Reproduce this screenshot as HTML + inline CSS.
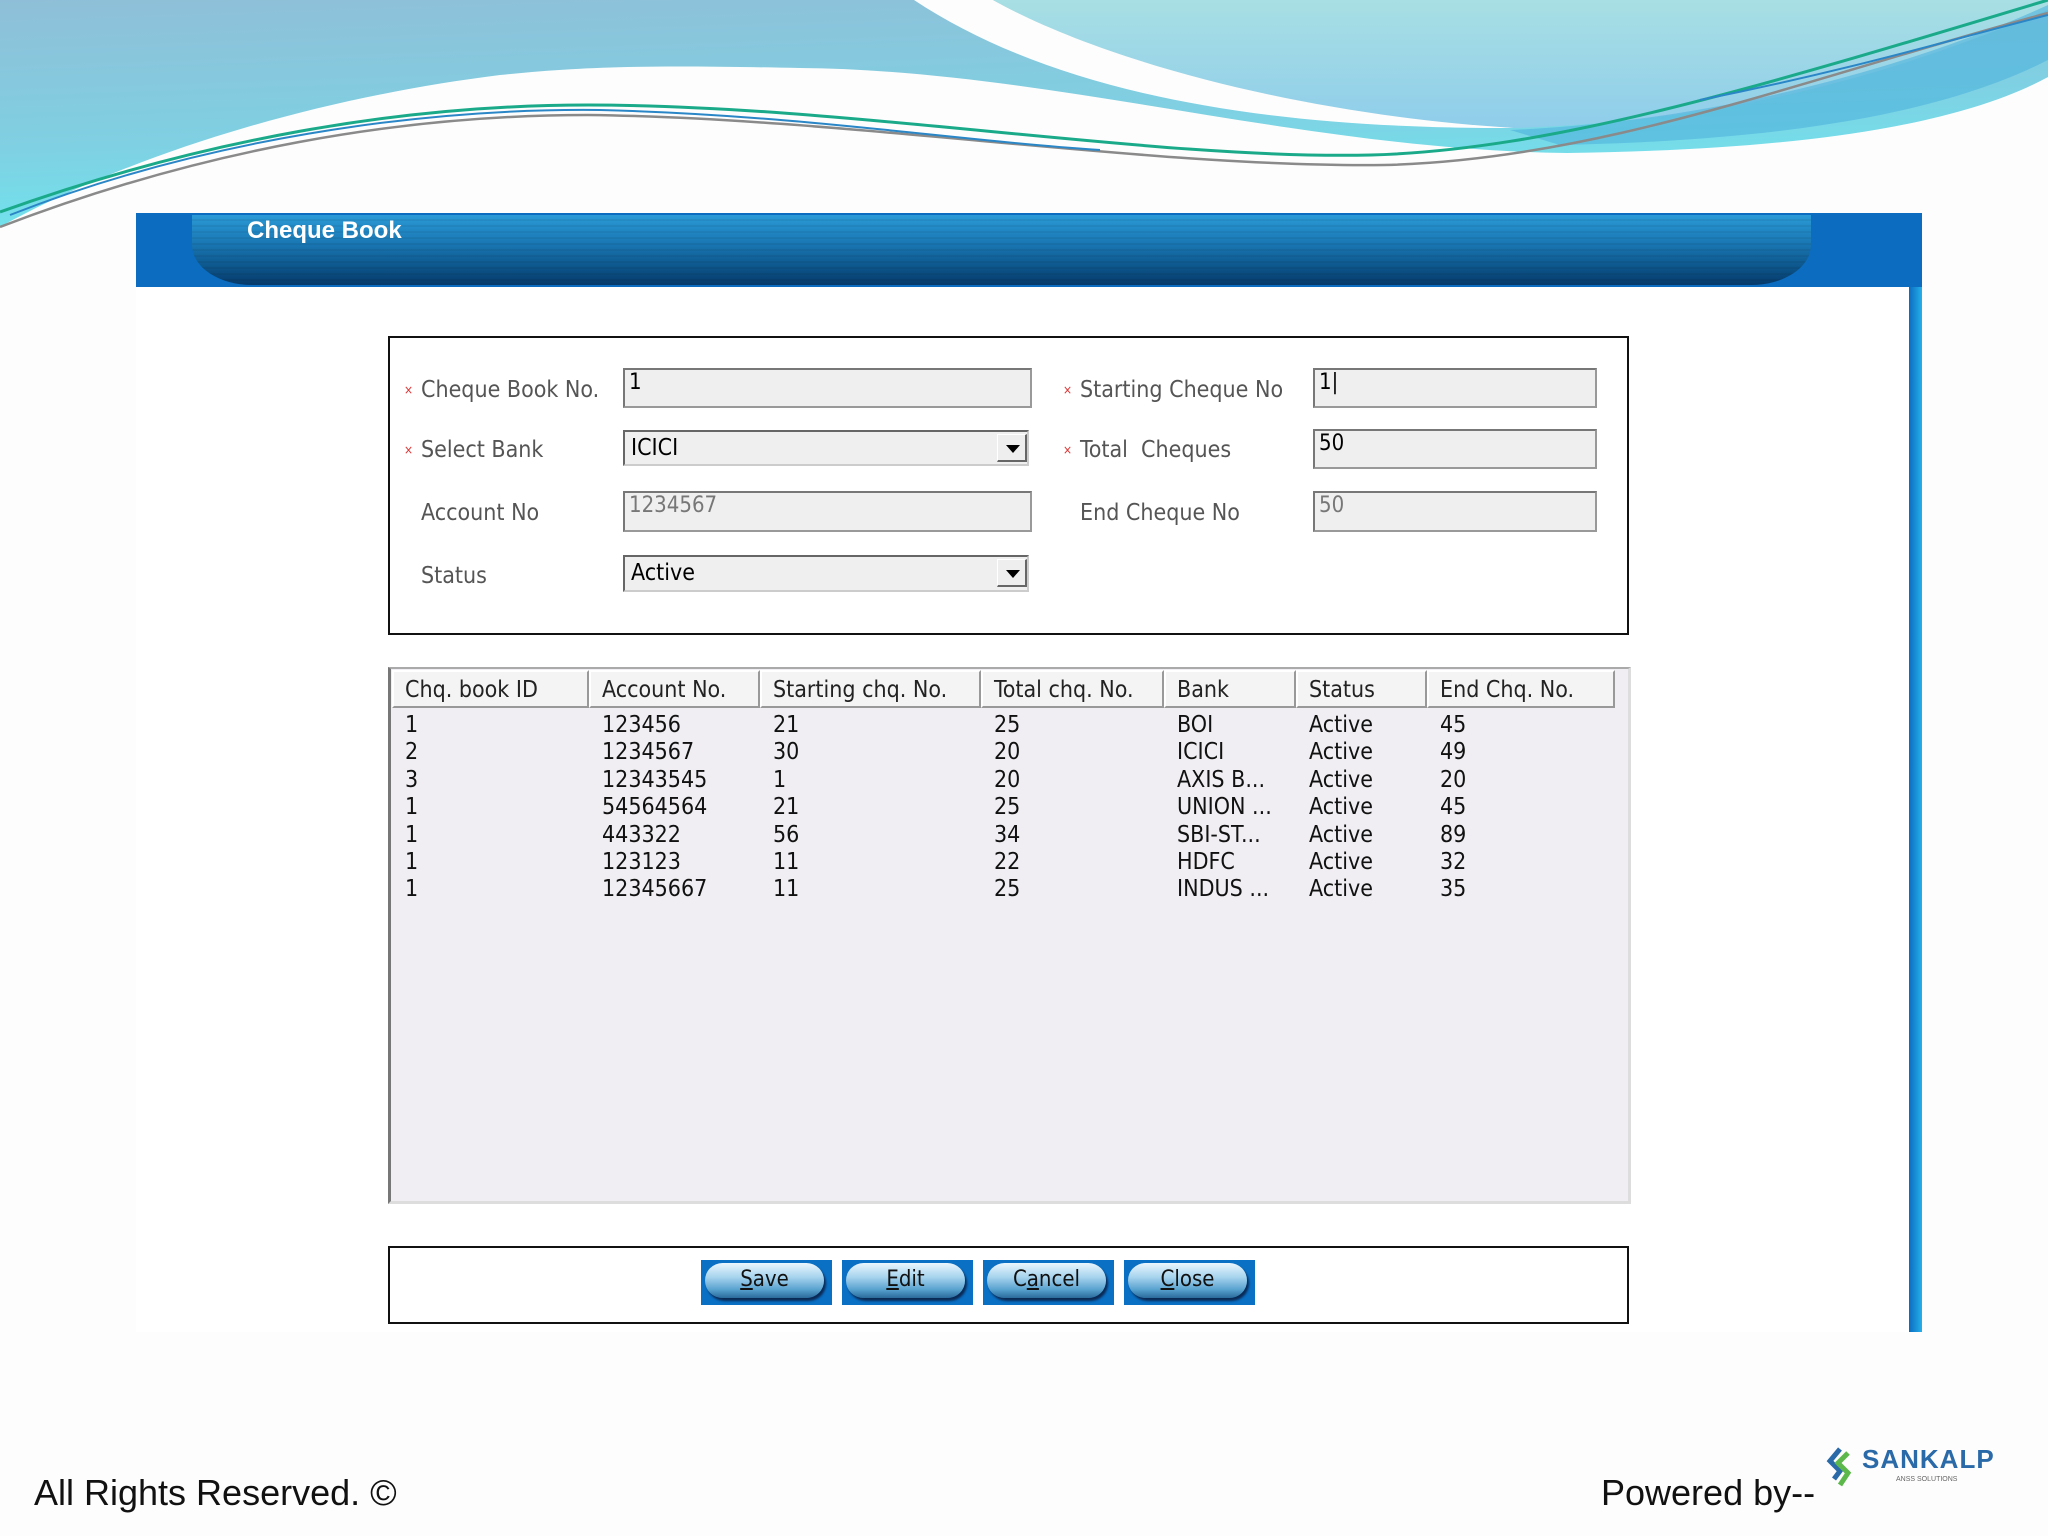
<!DOCTYPE html>
<html><head><meta charset="utf-8"><style>
*{margin:0;padding:0;box-sizing:border-box}
body{width:2048px;height:1536px;background:#fdfdfd;position:relative;overflow:hidden;font-family:"DejaVu Sans Condensed","Liberation Sans",sans-serif}
.a{position:absolute}
.lbl{position:absolute;font-size:23px;color:#555;line-height:26px}
.star{position:absolute;color:#d33;font-size:12px;line-height:26px}
.inp{position:absolute;background:#efefef;border:2px solid #777;border-right-color:#999;border-bottom-color:#999;font-size:22px;color:#000;padding-left:4px;line-height:30px}
.sel{position:absolute;background:#efefef;border:2px solid #666;border-right-color:#ccc;border-bottom-color:#ccc;font-size:23px;color:#000;padding-left:6px;line-height:32px}
.sel .dd{position:absolute;right:0;top:2px;width:30px;height:28px;background:#eee;border-right:2px solid #666;border-bottom:2px solid #666;border-left:1px solid #fff;border-top:1px solid #fff}
.sel .dd:after{content:"";position:absolute;left:8px;top:10px;border-left:7px solid transparent;border-right:7px solid transparent;border-top:8px solid #000}
.hd{position:absolute;top:670px;height:38px;border:2px solid #fff;border-right-color:#999;border-bottom-color:#999;background:#f4f4f4;font-size:23px;line-height:36px;padding-left:11px;color:#222}
.row{position:absolute;font-size:23px;color:#111;line-height:27.4px}
.btn{position:absolute;top:1260px;width:131px;height:45px;background:#0a70c4}
.btn span{position:absolute;left:4px;top:3px;right:8px;bottom:7px;border-radius:20px;background:linear-gradient(#eaf6fd 0%,#a8d4ee 40%,#5aa3d0 75%,#2a6a9a 100%);box-shadow:2px 3px 2px #0b2a55;font-size:22px;text-align:center;line-height:34px;color:#111}
</style></head><body>
<svg class="a" style="left:0;top:0" width="2048" height="260" viewBox="0 0 2048 260">
<defs>
<linearGradient id="g1" x1="0" y1="0" x2="0.3" y2="1"><stop offset="0" stop-color="#8fbfd8"/><stop offset="0.6" stop-color="#7fd0e2"/><stop offset="1" stop-color="#6ee6ee"/></linearGradient>
<linearGradient id="g2" x1="0" y1="0" x2="0" y2="1"><stop offset="0" stop-color="#a8dfe4"/><stop offset="1" stop-color="#8fcdea"/></linearGradient>
</defs>
<path d="M0 0 H2048 V77 C1950 130 1780 150 1567 153 C1300 150 1050 70 800 68 C650 65 588 66 500 75 C300 100 120 160 0 227 Z" fill="url(#g1)"/>
<path d="M914 0 C1050 90 1250 128 1502 128 L1515 128 C1300 110 1100 60 993 0 Z" fill="#fdfdfd"/>
<path d="M993 0 H2048 V10 C1900 70 1750 120 1515 128 C1300 115 1100 60 993 0 Z" fill="url(#g2)"/>
<path d="M1510 130 C1750 120 1950 50 2048 5 V60 C1950 110 1800 140 1560 145 Z" fill="#4fb3dc" opacity="0.6"/>
<path d="M0 212 C200 140 400 105 588 105 C850 105 1150 160 1371 155 C1550 150 1750 90 2048 0" stroke="#1aaa8a" stroke-width="3" fill="none"/>
<path d="M0 227 C200 150 400 115 588 115 C850 118 1150 168 1384 165 C1600 160 1800 80 2048 13" stroke="#8a8a8a" stroke-width="2.5" fill="none"/>
<path d="M10 215 C200 140 420 108 600 110 C800 115 950 140 1100 150" stroke="#2a86c6" stroke-width="2" fill="none"/>
<path d="M1700 100 C1850 70 1950 40 2048 15" stroke="#2a86c6" stroke-width="2" fill="none"/>
</svg>
<!-- panel -->
<div class="a" style="left:136px;top:287px;width:1773px;height:1045px;background:#fff"></div>
<div class="a" style="left:1909px;top:213px;width:13px;height:1119px;background:linear-gradient(90deg,#0b6cc0,#24b0ea)"></div>
<div class="a" style="left:136px;top:213px;width:1786px;height:74px;background:#0b6cc0"></div>
<div class="a" style="left:192px;top:215px;width:1619px;height:70px;border-radius:0 0 60px 60px/0 0 40px 40px;background:linear-gradient(#2a9ad6,#1a78b4 40%,#0e5a90 70%,#063a6a)"></div>
<div class="a" style="left:192px;top:215px;width:1619px;height:70px;border-radius:0 0 60px 60px/0 0 40px 40px;background:repeating-linear-gradient(rgba(255,255,255,0) 0 4px,rgba(0,0,0,.06) 4px 6px)"></div>
<div class="a" style="left:247px;top:216px;font-family:'Liberation Sans',sans-serif;font-weight:bold;font-size:24px;color:#fff;line-height:30px">Cheque Book</div>
<!-- form -->
<div class="a" style="left:388px;top:336px;width:1241px;height:299px;border:2px solid #111;background:#fff"></div>
<span class="star" style="left:404px;top:377px">×</span><span class="lbl" style="left:421px;top:377px">Cheque Book No.</span>
<span class="star" style="left:404px;top:437px">×</span><span class="lbl" style="left:421px;top:437px">Select Bank</span>
<span class="lbl" style="left:421px;top:500px">Account No</span>
<span class="lbl" style="left:421px;top:563px">Status</span>
<div class="inp" style="left:623px;top:368px;width:409px;height:40px;line-height:26px">1</div>
<div class="sel" style="left:623px;top:430px;width:406px;height:36px">ICICI<div class="dd"></div></div>
<div class="inp" style="left:623px;top:491px;width:409px;height:41px;color:#777;line-height:26px">1234567</div>
<div class="sel" style="left:623px;top:555px;width:406px;height:37px">Active<div class="dd"></div></div>
<span class="star" style="left:1063px;top:377px">×</span><span class="lbl" style="left:1080px;top:377px">Starting Cheque No</span>
<span class="star" style="left:1063px;top:437px">×</span><span class="lbl" style="left:1080px;top:437px">Total&nbsp; Cheques</span>
<span class="lbl" style="left:1080px;top:500px">End Cheque No</span>
<div class="inp" style="left:1313px;top:368px;width:284px;height:40px;line-height:26px">1|</div>
<div class="inp" style="left:1313px;top:429px;width:284px;height:40px;line-height:26px">50</div>
<div class="inp" style="left:1313px;top:491px;width:284px;height:41px;color:#777;line-height:26px">50</div>
<!-- table -->
<div class="a" style="left:388px;top:667px;width:1243px;height:537px;background:#f0eef2;border-left:3px solid #777;border-top:2px solid #aaa;border-bottom:3px solid #ddd;border-right:3px solid #ddd"></div>
<div class="hd" style="left:392px;width:197px">Chq. book ID</div>
<div class="hd" style="left:589px;width:171px">Account No.</div>
<div class="hd" style="left:760px;width:221px">Starting chq. No.</div>
<div class="hd" style="left:981px;width:183px">Total chq. No.</div>
<div class="hd" style="left:1164px;width:132px">Bank</div>
<div class="hd" style="left:1296px;width:131px">Status</div>
<div class="hd" style="left:1427px;width:188px">End Chq. No.</div>
<div class="row" style="left:405px;top:712px">1<br>2<br>3<br>1<br>1<br>1<br>1</div>
<div class="row" style="left:602px;top:712px">123456<br>1234567<br>12343545<br>54564564<br>443322<br>123123<br>12345667</div>
<div class="row" style="left:773px;top:712px">21<br>30<br>1<br>21<br>56<br>11<br>11</div>
<div class="row" style="left:994px;top:712px">25<br>20<br>20<br>25<br>34<br>22<br>25</div>
<div class="row" style="left:1177px;top:712px">BOI<br>ICICI<br>AXIS B...<br>UNION ...<br>SBI-ST...<br>HDFC<br>INDUS ...</div>
<div class="row" style="left:1309px;top:712px">Active<br>Active<br>Active<br>Active<br>Active<br>Active<br>Active</div>
<div class="row" style="left:1440px;top:712px">45<br>49<br>20<br>45<br>89<br>32<br>35</div>
<!-- buttons -->
<div class="a" style="left:388px;top:1246px;width:1241px;height:78px;border:2px solid #111;background:#fff"></div>
<div class="btn" style="left:701px"><span><u>S</u>ave</span></div>
<div class="btn" style="left:842px"><span><u>E</u>dit</span></div>
<div class="btn" style="left:983px"><span>C<u>a</u>ncel</span></div>
<div class="btn" style="left:1124px"><span><u>C</u>lose</span></div>
<!-- footer -->
<div class="a" style="left:34px;top:1472px;font-family:'Liberation Sans',sans-serif;font-size:36px;color:#111">All Rights Reserved. ©</div>
<div class="a" style="left:1601px;top:1472px;font-family:'Liberation Sans',sans-serif;font-size:36px;color:#111">Powered by--</div>
<svg class="a" style="left:1826px;top:1443px" width="175" height="50" viewBox="0 0 175 50">
<path d="M14 6 L4 18 L14 28 L8 36" stroke="#2a6aa8" stroke-width="5" fill="none"/>
<path d="M22 10 L12 20 L22 30 L14 42" stroke="#5cb84a" stroke-width="5" fill="none"/>
<text x="36" y="25" font-family="Liberation Sans,sans-serif" font-weight="bold" font-size="26" fill="#2a6aa8" letter-spacing="1">SANKALP</text>
<text x="70" y="38" font-family="Liberation Sans,sans-serif" font-size="7" fill="#666">ANSS SOLUTIONS</text>
</svg>
</body></html>
